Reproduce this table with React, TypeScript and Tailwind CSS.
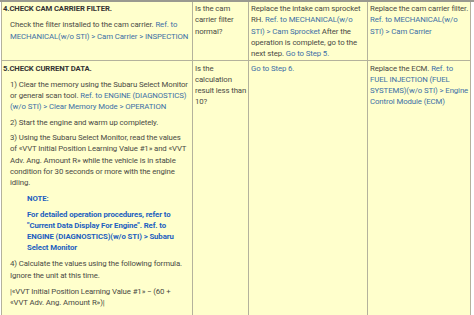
import React from 'react';

const L = ({ children }: { children: React.ReactNode }) => (
  <span className="text-[#3d6fa6]">{children}</span>
);

export default function App() {
  return (
    <div className="w-[474px] h-[315px] overflow-hidden bg-white font-['Roboto',sans-serif] text-[7.8px] leading-[11.3px] tracking-[-0.1px] text-[#4a4a44]">
      <div className="h-[2px] bg-[#9a9a90]" />
      <table className="border-collapse bg-[#ffffcc] ml-[1px] table-fixed w-[469px] whitespace-nowrap">
        <colgroup>
          <col className="w-[191px]" />
          <col className="w-[56px]" />
          <col className="w-[119px]" />
          <col className="w-[103px]" />
        </colgroup>
        <tbody>
          <tr className="align-top">
            <td className="border border-t-0 border-[#b4b29c] px-[1px] pt-[1px] h-[58px]">
              <div className="font-bold text-[#333] text-[7.7px]">4.CHECK CAM CARRIER FILTER.</div>
              <div className="pl-[7px] mt-[5px]">
                Check the filter installed to the cam carrier. <L>Ref. to<br />MECHANICAL(w/o STI) &gt; Cam Carrier &gt; INSPECTION</L>
              </div>
            </td>
            <td className="border border-t-0 border-[#b4b29c] px-[2px] pt-[1px]">
              Is the cam<br />carrier filter<br />normal?
            </td>
            <td className="border border-t-0 border-[#b4b29c] px-[2px] pt-[1px]">
              Replace the intake cam sprocket<br />RH. <L>Ref. to MECHANICAL(w/o<br />STI) &gt; Cam Sprocket</L> After the<br />operation is complete, go to the<br />next step. <L>Go to Step 5.</L>
            </td>
            <td className="border border-t-0 border-[#b4b29c] px-[2px] pt-[1px]">
              Replace the cam carrier filter.<br /><L>Ref. to MECHANICAL(w/o<br />STI) &gt; Cam Carrier</L>
            </td>
          </tr>
          <tr className="align-top">
            <td className="border border-[#b4b29c] px-[1px] pt-[2px] pb-[7px]">
              <div className="font-bold text-[#333] text-[7.7px]">5.CHECK CURRENT DATA.</div>
              <div className="pl-[7px] mt-[5px]">
                <p>
                  1) Clear the memory using the Subaru Select Monitor<br />or general scan tool. <L>Ref. to ENGINE (DIAGNOSTICS)<br />(w/o STI) &gt; Clear Memory Mode &gt; OPERATION</L>
                </p>
                <p className="mt-[4px]">2) Start the engine and warm up completely.</p>
                <p className="mt-[4px]">
                  3) Using the Subaru Select Monitor, read the values<br />of «VVT Initial Position Learning Value #1» and «VVT<br />Adv. Ang. Amount R» while the vehicle is in stable<br />condition for 30 seconds or more with the engine<br />idling.
                </p>
                <div className="pl-[17px] mt-[5px] font-bold text-[#1d5fc0] leading-[11px]">
                  <p>NOTE:</p>
                  <p className="mt-[5px]">
                    For detailed operation procedures, refer to<br />"Current Data Display For Engine". Ref. to<br />ENGINE (DIAGNOSTICS)(w/o STI) &gt; Subaru<br />Select Monitor
                  </p>
                </div>
                <p className="mt-[5px]">
                  4) Calculate the values using the following formula.<br />Ignore the unit at this time.
                </p>
                <p className="mt-[5px]">
                  |«VVT Initial Position Learning Value #1» − (60 +<br />«VVT Adv. Ang. Amount R»)|
                </p>
              </div>
            </td>
            <td className="border border-[#b4b29c] px-[2px] pt-[2px]">
              Is the<br />calculation<br />result less than<br />10?
            </td>
            <td className="border border-[#b4b29c] px-[2px] pt-[2px]">
              <L>Go to Step 6.</L>
            </td>
            <td className="border border-[#b4b29c] px-[2px] pt-[2px]">
              Replace the ECM. <L>Ref. to<br />FUEL INJECTION (FUEL<br />SYSTEMS)(w/o STI) &gt; Engine<br />Control Module (ECM)</L>
            </td>
          </tr>
        </tbody>
      </table>
      <div className="flex h-[8px] mt-[1px]">
        <div className="w-[15px] bg-[#e4e6e8]" />
        <div className="w-[155px] bg-white" />
        <div className="w-[80px] bg-[#dfe5ea]" />
        <div className="w-[27px] bg-white" />
        <div className="flex-1 bg-[#dfe5ea]" />
      </div>
    </div>
  );
}
